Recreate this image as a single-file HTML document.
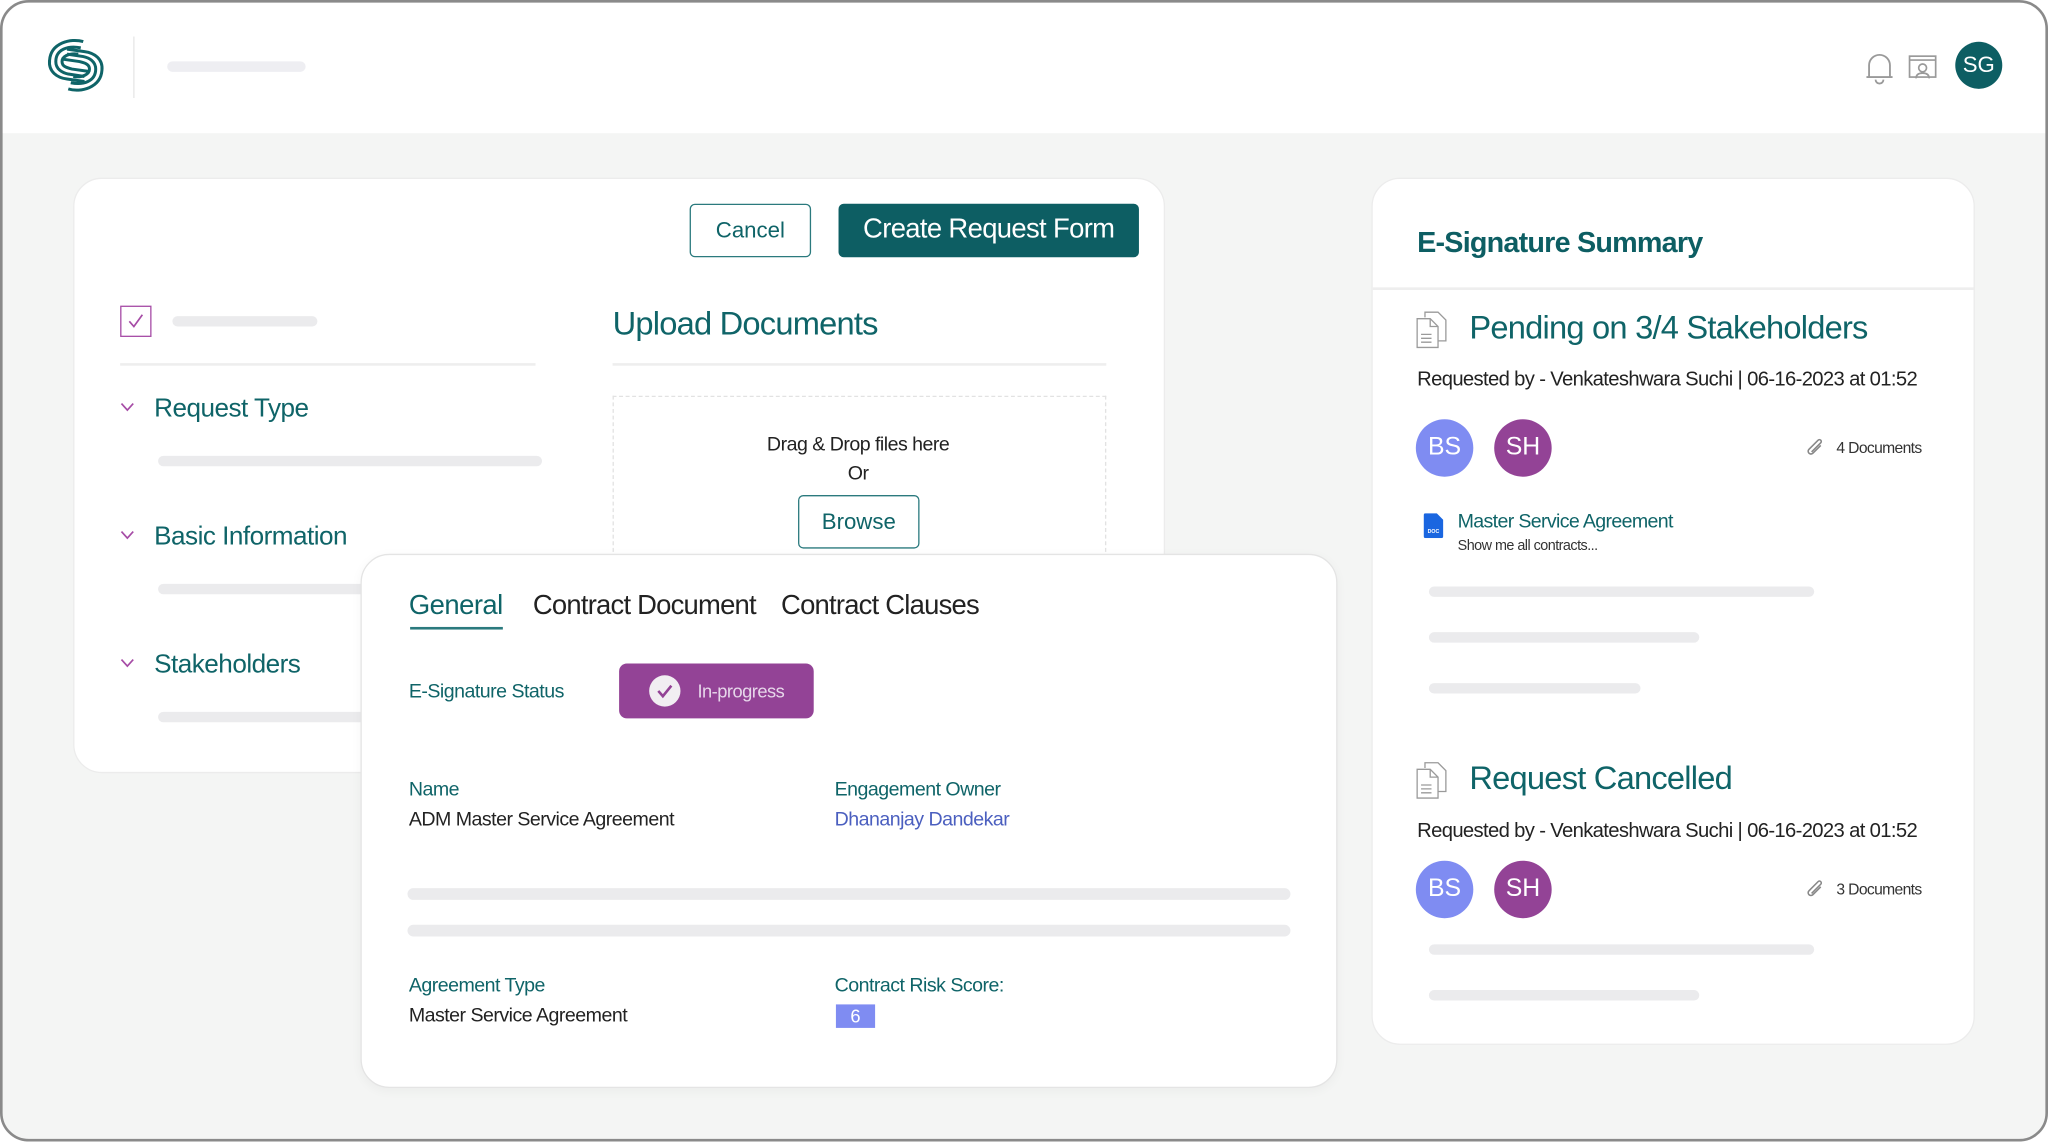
<!DOCTYPE html>
<html><head><meta charset="utf-8"><style>
*{margin:0;padding:0;box-sizing:border-box}
html,body{width:2048px;height:1141px;overflow:hidden;background:#fff}
#s{position:absolute;left:0;top:0;width:1568px;height:874px;transform:scale(1.30612);transform-origin:0 0;font-family:"Liberation Sans",sans-serif;overflow:hidden}
.frame{position:absolute;left:0;top:0;width:1568px;height:874px;border-radius:22px;overflow:hidden;background:#f4f5f4}
.fb{position:absolute;left:0;top:0;width:1568px;height:874px;border:2px solid #8a8a8a;border-radius:22px}
.hdr{position:absolute;left:0;top:0;width:100%;height:102px;background:#fff}
.a{position:absolute}
.t{position:absolute;white-space:nowrap;line-height:1;letter-spacing:-0.4px}
.bar{position:absolute;background:#ebebed;border-radius:5px;height:8px}
.card{position:absolute;background:#fff;border:1px solid #ececec;border-radius:22px}
.teal{color:#0f6468}
.av{position:absolute;width:44px;height:44px;border-radius:50%;color:#fff;font-size:19px;text-align:center;line-height:44px}
</style></head><body><div id="s"><div class="frame">
<div class="hdr"></div>
<svg class="a" style="left:35px;top:29px" width="46" height="42" viewBox="0 0 48 44" fill="none" stroke="#0f6468" stroke-width="2.4">
<path d="M30 3C20 0 4 4 3 18c-1 9 6 14 14 15l14 2"/><path d="M28 8C18 6 8 9 8 19c0 6 5 9 10 10l13 2"/><path d="M26 13c-8-1-13 2-13 6 0 4 4 5 8 6l14 2"/>
<path d="M18 41c10 3 26-1 27-15 1-9-6-14-14-15L17 9"/><path d="M20 36c10 2 20-1 20-11 0-6-5-9-10-10L17 13"/><path d="M22 31c8 1 13-2 13-6 0-4-4-5-8-6L13 17"/>
</svg>
<div class="a" style="left:102px;top:28px;width:1px;height:47px;background:#e6e6e6"></div>
<div class="bar" style="left:128px;top:47px;width:106px;background:#eeeef2"></div>
<svg class="a" style="left:1428px;top:40px" width="22" height="25" viewBox="0 0 22 25" fill="none" stroke="#9a9a9a" stroke-width="1.4"><path d="M3 19V10a8 8 0 0116 0v9zM1 19h20M8 21a3 3 0 006 0"/></svg>
<svg class="a" style="left:1461px;top:42px" width="22" height="20" viewBox="0 0 22 20" fill="none" stroke="#9a9a9a" stroke-width="1.3"><rect x="1" y="1" width="20" height="16"/><path d="M1 4h20"/><circle cx="11" cy="10" r="3"/><path d="M6 18c0-3 2-4 5-4s5 1 5 4"/></svg>
<div class="av" style="left:1497px;top:32px;width:36px;height:36px;line-height:36px;background:#0d5e63;font-size:17px">SG</div>

<div class="card" style="left:56px;top:136px;width:836px;height:456px"></div>
<div class="a" style="left:528px;top:156px;width:93px;height:41px;border:1px solid #2b7a7e;border-radius:4px;color:#0f6468;font-size:17px;text-align:center;line-height:39px">Cancel</div>
<div class="a" style="left:642px;top:156px;width:230px;height:41px;background:#0d5e63;border-radius:4px;color:#fff;font-size:21px;text-align:center;line-height:39px;letter-spacing:-0.5px">Create Request Form</div>
<div class="a" style="left:92px;top:234px;width:24px;height:24px;border:1.5px solid #a64ca6"></div>
<svg class="a" style="left:97px;top:239px" width="14" height="14" viewBox="0 0 14 14" fill="none" stroke="#a64ca6" stroke-width="1.3"><path d="M2 7l3.5 4L12 2"/></svg>
<div class="bar" style="left:132px;top:242px;width:111px"></div>
<div class="a" style="left:92px;top:278px;width:318px;height:2px;background:#eeeeee"></div>
<div class="t teal" style="left:469px;top:236px;font-size:25px;letter-spacing:-0.6px">Upload Documents</div>
<div class="a" style="left:469px;top:278px;width:378px;height:2px;background:#eeeeee"></div>
<div class="a" style="left:469px;top:303px;width:378px;height:160px;border:1.5px dashed #e2e2e2"></div>
<div class="t" style="left:557px;top:333px;width:200px;text-align:center;font-size:15px;color:#222">Drag &amp; Drop files here</div>
<div class="t" style="left:557px;top:355px;width:200px;text-align:center;font-size:15px;color:#222">Or</div>
<div class="a" style="left:611px;top:379px;width:93px;height:41px;border:1px solid #2b7a7e;border-radius:4px;color:#0f6468;font-size:17px;text-align:center;line-height:39px">Browse</div>
<svg class="a" style="left:92px;top:308px" width="11" height="8" viewBox="0 0 11 8" fill="none" stroke="#a64ca6" stroke-width="1.3"><path d="M1 1l4.5 5L10 1"/></svg>
<div class="t teal" style="left:118px;top:303px;font-size:20px">Request Type</div>
<div class="bar" style="left:121px;top:349px;width:294px"></div>
<svg class="a" style="left:92px;top:406px" width="11" height="8" viewBox="0 0 11 8" fill="none" stroke="#a64ca6" stroke-width="1.3"><path d="M1 1l4.5 5L10 1"/></svg>
<div class="t teal" style="left:118px;top:401px;font-size:20px">Basic Information</div>
<div class="bar" style="left:121px;top:447px;width:294px"></div>
<svg class="a" style="left:92px;top:504px" width="11" height="8" viewBox="0 0 11 8" fill="none" stroke="#a64ca6" stroke-width="1.3"><path d="M1 1l4.5 5L10 1"/></svg>
<div class="t teal" style="left:118px;top:499px;font-size:20px">Stakeholders</div>
<div class="bar" style="left:121px;top:545px;width:294px"></div>

<div class="card" style="left:276px;top:424px;width:748px;height:409px;border-color:#e4e4e4;box-shadow:0 2px 8px rgba(0,0,0,.04)"></div>
<div class="t teal" style="left:313px;top:453px;font-size:21px">General</div>
<div class="a" style="left:314px;top:480px;width:71px;height:2px;background:#2b7a7e"></div>
<div class="t" style="left:408px;top:453px;font-size:21px;color:#222;letter-spacing:-0.6px">Contract Document</div>
<div class="t" style="left:598px;top:453px;font-size:21px;color:#222;letter-spacing:-0.6px">Contract Clauses</div>
<div class="t teal" style="left:313px;top:522px;font-size:15px">E-Signature Status</div>
<div class="a" style="left:474px;top:508px;width:149px;height:42px;background:#934396;border-radius:6px"></div>
<div class="a" style="left:497px;top:517px;width:24px;height:24px;border-radius:50%;background:#f1eef2"></div>
<svg class="a" style="left:501px;top:521px" width="16" height="16" viewBox="0 0 16 16" fill="none" stroke="#934396" stroke-width="2"><path d="M3 8l3.5 4L13 4"/></svg>
<div class="t" style="left:534px;top:522px;font-size:14px;color:#e6d6ea">In-progress</div>
<div class="t teal" style="left:313px;top:597px;font-size:15px">Name</div>
<div class="t" style="left:313px;top:620px;font-size:15px;color:#222">ADM Master Service Agreement</div>
<div class="t teal" style="left:639px;top:597px;font-size:15px">Engagement Owner</div>
<div class="t" style="left:639px;top:620px;font-size:15px;color:#4b5fbf">Dhananjay Dandekar</div>
<div class="bar" style="left:312px;top:680px;width:676px;height:9px"></div>
<div class="bar" style="left:312px;top:708px;width:676px;height:9px"></div>
<div class="t teal" style="left:313px;top:747px;font-size:15px">Agreement Type</div>
<div class="t" style="left:313px;top:770px;font-size:15px;color:#222">Master Service Agreement</div>
<div class="t teal" style="left:639px;top:747px;font-size:15px">Contract Risk Score:</div>
<div class="a" style="left:640px;top:769px;width:30px;height:18px;background:#7f8cf2;color:#fff;font-size:14px;text-align:center;line-height:18px">6</div>

<div class="card" style="left:1050px;top:136px;width:462px;height:664px"></div>
<div class="t teal" style="left:1085px;top:175px;font-size:22px;font-weight:bold;color:#0d5e63;letter-spacing:-0.6px">E-Signature Summary</div>
<div class="a" style="left:1051px;top:220px;width:460px;height:2px;background:#eeeeee"></div>
<svg class="a" style="left:1084px;top:238px" width="24" height="29" viewBox="0 0 24 29" fill="none" stroke="#9a9a9a" stroke-width="1"><path d="M7 5V1h10l6 6v16h-6"/><path d="M1 6h10l6 6v16H1z"/><path d="M11 6v6h6M4 18h8M4 21h8M4 24h8"/></svg>
<div class="t teal" style="left:1125px;top:239px;font-size:25px;letter-spacing:-0.6px">Pending on 3/4 Stakeholders</div>
<div class="t" style="left:1085px;top:283px;font-size:15.5px;color:#222;letter-spacing:-0.5px">Requested by - Venkateshwara Suchi | 06-16-2023 at 01:52</div>
<div class="av" style="left:1084px;top:321px;background:#7f8cf2">BS</div>
<div class="av" style="left:1144px;top:321px;background:#934396">SH</div>
<svg class="a" style="left:1382px;top:335px" width="16" height="16" viewBox="0 0 16 16" fill="none" stroke="#888" stroke-width="1.2"><path d="M12 6l-6 6a2 2 0 01-3-3l7-7a1.4 1.4 0 012 2l-7 7"/></svg>
<div class="t" style="left:1406px;top:337px;font-size:12px;color:#333;letter-spacing:-0.5px">4 Documents</div>
<svg class="a" style="left:1090px;top:393px" width="15" height="19" viewBox="0 0 15 19"><path d="M0 1.5A1.5 1.5 0 011.5 0H10l5 5v12.5a1.5 1.5 0 01-1.5 1.5h-12A1.5 1.5 0 010 17.5z" fill="#1a66e0"/><text x="7.5" y="15" font-size="4" fill="#fff" text-anchor="middle" font-family="Liberation Sans" font-weight="bold">DOC</text></svg>
<div class="t teal" style="left:1116px;top:392px;font-size:15px;letter-spacing:-0.5px">Master Service Agreement</div>
<div class="t" style="left:1116px;top:413px;font-size:11px;color:#333">Show me all contracts...</div>
<div class="bar" style="left:1094px;top:449px;width:295px"></div>
<div class="bar" style="left:1094px;top:484px;width:207px"></div>
<div class="bar" style="left:1094px;top:523px;width:162px"></div>
<svg class="a" style="left:1084px;top:583px" width="24" height="29" viewBox="0 0 24 29" fill="none" stroke="#9a9a9a" stroke-width="1"><path d="M7 5V1h10l6 6v16h-6"/><path d="M1 6h10l6 6v16H1z"/><path d="M11 6v6h6M4 18h8M4 21h8M4 24h8"/></svg>
<div class="t teal" style="left:1125px;top:584px;font-size:25px;letter-spacing:-0.6px">Request Cancelled</div>
<div class="t" style="left:1085px;top:629px;font-size:15.5px;color:#222;letter-spacing:-0.5px">Requested by - Venkateshwara Suchi | 06-16-2023 at 01:52</div>
<div class="av" style="left:1084px;top:659px;background:#7f8cf2">BS</div>
<div class="av" style="left:1144px;top:659px;background:#934396">SH</div>
<svg class="a" style="left:1382px;top:673px" width="16" height="16" viewBox="0 0 16 16" fill="none" stroke="#888" stroke-width="1.2"><path d="M12 6l-6 6a2 2 0 01-3-3l7-7a1.4 1.4 0 012 2l-7 7"/></svg>
<div class="t" style="left:1406px;top:675px;font-size:12px;color:#333;letter-spacing:-0.5px">3 Documents</div>
<div class="bar" style="left:1094px;top:723px;width:295px"></div>
<div class="bar" style="left:1094px;top:758px;width:207px"></div>
</div><div class="fb"></div></div></body></html>
